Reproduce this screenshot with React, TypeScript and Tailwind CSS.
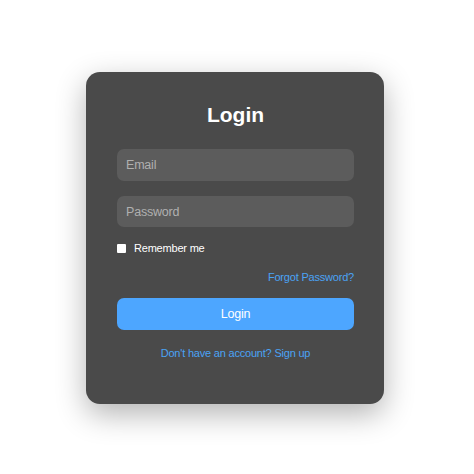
export default function App() {
  return (
    <div
      className="w-[474px] h-[474px] bg-white flex items-start pl-[86px] pt-[72px]"
      style={{ fontFamily: '"Liberation Sans", Arial, sans-serif' }}
    >
      <div className="w-[298px] h-[332px] bg-[#4a4a4a] rounded-[14px] shadow-[0_10px_30px_rgba(0,0,0,0.3)] pl-[31px] pr-[30px] pt-[30px] flex flex-col">
        <h1 className="text-white text-[21px] font-bold text-center leading-[26px]">Login</h1>

        <input
          type="text"
          placeholder="Email"
          className="mt-[21px] h-[32px] w-full rounded-[7px] bg-[#5c5c5c] px-[9px] text-[12.5px] tracking-[-0.2px] text-white placeholder:text-[#b0b0b0] outline-none"
        />
        <input
          type="password"
          placeholder="Password"
          className="mt-[15px] h-[31px] w-full rounded-[7px] bg-[#5c5c5c] px-[9px] text-[12.5px] tracking-[-0.2px] text-white placeholder:text-[#b0b0b0] outline-none"
        />

        {/* Remember me */}
        <label className="mt-[13px] flex items-center gap-[8px] h-[16px] text-white text-[11px] tracking-[-0.2px]">
          <span className="w-[9px] h-[9px] bg-white rounded-[1px] shrink-0" />
          Remember me
        </label>

        <div className="mt-[13px] flex justify-end h-[16px] items-center">
          <a className="text-[#4aa3f5] text-[11px] tracking-[-0.2px]">Forgot Password?</a>
        </div>

        <button className="mt-[13px] h-[32px] w-full rounded-[7px] bg-[#4da6ff] text-white text-[12.5px] tracking-[-0.2px]">
          Login
        </button>

        <p className="mt-[15px] text-center text-[#4aa3f5] text-[11px] tracking-[-0.2px] leading-[16px]">
          Don't have an account? Sign up
        </p>
      </div>
    </div>
  )
}
